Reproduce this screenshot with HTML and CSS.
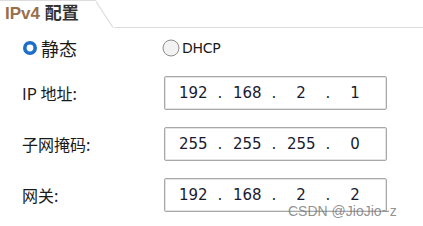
FILE: index.html
```html
<!DOCTYPE html>
<html lang="zh-CN">
<head>
  <meta charset="UTF-8">
  <title>IPv4 配置</title>
  <link rel="stylesheet" href="styles.css">
</head>
<body>
  <div class="tabbar">
    <div class="tab"><span class="tab-en">IPv4</span> 配置</div>
    <svg class="tab-slant" width="18" height="28" viewBox="0 0 18 28">
      <line x1="0" y1="1.5" x2="17" y2="27.5" stroke="#dcdcdc" stroke-width="1.2"/>
    </svg>
    <div class="tab-rest"></div>
  </div>

  <div class="modes">
    <label class="radio">
      <svg width="16" height="16" viewBox="0 0 16 16">
        <circle cx="8" cy="8" r="5.2" fill="none" stroke="#1b6fc8" stroke-width="3.6"/>
      </svg>
      <span>静态</span>
    </label>
    <label class="radio dhcp">
      <svg width="18" height="18" viewBox="0 0 18 18">
        <circle cx="9" cy="9" r="8" fill="#f2f2f2" stroke="#8c8c8c" stroke-width="1"/>
      </svg>
      <span>DHCP</span>
    </label>
  </div>

  <div class="fields">
    <div class="row">
      <div class="label">IP 地址:</div>
      <div class="ipbox">
        <span class="oct">192</span><span class="dot">.</span>
        <span class="oct">168</span><span class="dot">.</span>
        <span class="oct">2</span><span class="dot">.</span>
        <span class="oct">1</span>
      </div>
    </div>
    <div class="row">
      <div class="label">子网掩码:</div>
      <div class="ipbox">
        <span class="oct">255</span><span class="dot">.</span>
        <span class="oct">255</span><span class="dot">.</span>
        <span class="oct">255</span><span class="dot">.</span>
        <span class="oct">0</span>
      </div>
    </div>
    <div class="row">
      <div class="label">网关:</div>
      <div class="ipbox">
        <span class="oct">192</span><span class="dot">.</span>
        <span class="oct">168</span><span class="dot">.</span>
        <span class="oct">2</span><span class="dot">.</span>
        <span class="oct">2</span>
      </div>
    </div>
  </div>

  <div class="watermark">CSDN @JioJio~z</div>
</body>
</html>
```

FILE: styles.css
```css
body {
  margin: 0;
  width: 423px;
  height: 226px;
  background: #ffffff;
  font-family: "Liberation Sans", "Noto Sans CJK SC", sans-serif;
  color: #1a1a1a;
  position: relative;
  overflow: hidden;
}

/* вкладка сверху */
.tabbar {
  display: flex;
  height: 28px;
}

.tab {
  width: 91px;
  padding-left: 5px;
  border-top: 1px solid #dcdcdc;
  font-size: 17px;
  font-weight: bold;
  line-height: 26px;
  color: #333333;
  white-space: nowrap;
}

.tab-en {
  color: #9a6e4a;
}

.tab-slant {
  display: block;
  flex: none;
}

.tab-rest {
  flex: 1;
  border-bottom: 1px solid #dcdcdc;
}

/* переключатели */
.modes {
  display: flex;
  align-items: center;
  height: 38px;
  margin-top: 1px;
  padding-left: 22px;
}

.radio {
  display: flex;
  align-items: center;
  gap: 3px;
  font-size: 18px;
}

.radio svg {
  display: block;
}

.radio span {
  font-family: "Noto Sans CJK SC", sans-serif;
}

.dhcp {
  margin-left: 85px;
  gap: 2px;
}

.dhcp span {
  font-family: "DejaVu Sans", sans-serif;
  font-size: 14px;
  letter-spacing: -0.3px;
}

/* поля адресов */
.fields {
  display: flex;
  flex-direction: column;
  gap: 17px;
  padding-left: 22px;
  margin-top: 9px;
}

.row {
  display: flex;
  align-items: center;
}

.label {
  width: 142px;
  font-family: "Noto Sans CJK SC", sans-serif;
  font-size: 16px;
  color: #1a1a1a;
}

.ipbox {
  display: flex;
  align-items: center;
  box-sizing: border-box;
  width: 223px;
  height: 34px;
  padding-left: 14px;
  border: 1px solid #a8a8a8;
  border-radius: 2px;
  box-shadow: inset 0 0 0 1px #e4e4e4;
  font-family: "DejaVu Sans", sans-serif;
  font-size: 15px;
  line-height: 18px;
  color: #1a1a30;
}

.oct {
  width: 28px;
  text-align: center;
}

.dot {
  width: 26px;
  text-align: center;
}

.watermark {
  position: absolute;
  left: 288px;
  top: 204px;
  font-family: "Liberation Sans", sans-serif;
  font-size: 14px;
  line-height: 15px;
  color: rgba(110, 110, 110, 0.75);
  white-space: nowrap;
}
```
